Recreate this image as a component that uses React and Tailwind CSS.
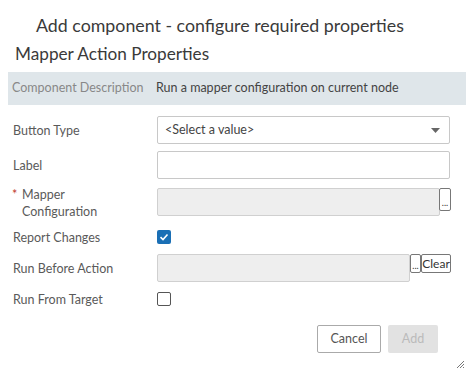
import { useState } from 'react';

const font = { fontFamily: 'Lato, "Open Sans", sans-serif' };

function Row({ label, required, children, className = '' }) {
  return (
    <div className={`flex items-center ${className}`}>
      <div className="w-[157px] pl-[13px] text-[12.5px] leading-[17px] text-[#5a5a5a]">
        {required ? (
          <div className="flex pt-[2px]">
            <span className="text-[#c0392b] w-[10px] -ml-[1px]">*</span>
            <span>Mapper<br />Configuration</span>
          </div>
        ) : label}
      </div>
      <div className="flex-1 flex items-start">{children}</div>
    </div>
  );
}

function Check({ checked }) {
  return checked ? (
    <div className="w-[14px] h-[14px] rounded-[2px] bg-[#1a6fb5] flex items-center justify-center">
      <svg width="10" height="10" viewBox="0 0 10 10">
        <path d="M1.5 5.2 L4 7.5 L8.5 2.5" fill="none" stroke="white" strokeWidth="1.6" />
      </svg>
    </div>
  ) : (
    <div className="w-[14px] h-[14px] rounded-[2px] border-[1.5px] border-[#555] bg-white" />
  );
}

export default function App() {
  const [report] = useState(true);
  return (
    <div className="w-[474px] h-[375px] bg-white relative overflow-hidden" style={font}>
      <div className="pl-[36px] pt-[12px] text-[17.8px] leading-[26px] text-[#3a3a3a]">
        Add component - configure required properties
      </div>
      <div className="pl-[15px] pt-[4px] text-[17.2px] leading-[24px] text-[#3a3a3a]">
        Mapper Action Properties
      </div>
      <div className="mx-[8px] mt-[6px] h-[33px] bg-[#dfe6ea] flex items-center text-[12.5px]">
        <div className="w-[148px] pl-[4px] text-[#888]">Component Description</div>
        <div className="text-[#444]">Run a mapper configuration on current node</div>
      </div>

      <div className="mt-[11px] flex flex-col">
        <Row label="Button Type" className="h-[28px]">
          <div className="w-[293px] h-[28px] border border-[#c8c8c8] rounded-[2px] flex items-center justify-between px-[7px] text-[12.5px] text-[#444]">
            <span>&lt;Select a value&gt;</span>
            <svg width="9" height="5" viewBox="0 0 9 5" className="mr-[2px]">
              <path d="M0 0 L9 0 L4.5 5 Z" fill="#666" />
            </svg>
          </div>
        </Row>
        <Row label="Label" className="h-[28px] mt-[7px]">
          <div className="w-[293px] h-[28px] border border-[#c8c8c8] rounded-[2px] bg-white" />
        </Row>
        <Row required className="h-[28px] mt-[9px]">
          <div className="w-[283px] h-[28px] border border-[#d0d0d0] rounded-[2px] bg-[#eeeeee]" />
          <div className="w-[12px] h-[23px] border border-[#777] rounded-[2px] bg-white text-[9px] leading-[28px] text-center text-[#333] -ml-[1px]">...</div>
        </Row>
        <Row label="Report Changes" className="h-[16px] mt-[13px]">
          <Check checked={report} />
        </Row>
        <Row label="Run Before Action" className="h-[28px] mt-[9px]">
          <div className="w-[253px] h-[28px] border border-[#d0d0d0] rounded-[2px] bg-[#eeeeee]" />
          <div className="w-[11px] h-[19px] border border-[#777] rounded-[2px] bg-white text-[9px] leading-[22px] text-center text-[#333]">...</div>
          <div className="w-[30px] h-[19px] border border-[#777] rounded-[2px] bg-white text-[12px] leading-[17px] text-center text-[#333]">Clear</div>
        </Row>
        <Row label="Run From Target" className="h-[16px] mt-[9px]">
          <Check checked={false} />
        </Row>
      </div>

      <div className="flex justify-end gap-[7px] pr-[36px] mt-[18px]">
        <div className="w-[64px] h-[28px] border border-[#aaa] rounded-[2px] flex items-center justify-center text-[12.5px] text-[#555]">Cancel</div>
        <div className="w-[50px] h-[28px] rounded-[2px] bg-[#e2e2e2] flex items-center justify-center text-[12.5px] text-[#bbb]">Add</div>
      </div>

      <svg className="absolute right-[9px] bottom-[6px]" width="9" height="9" viewBox="0 0 9 9">
        <path d="M1 8 L8 1 M4 8 L8 4 M7 8 L8 7" stroke="#777" strokeWidth="1" />
      </svg>
    </div>
  );
}
